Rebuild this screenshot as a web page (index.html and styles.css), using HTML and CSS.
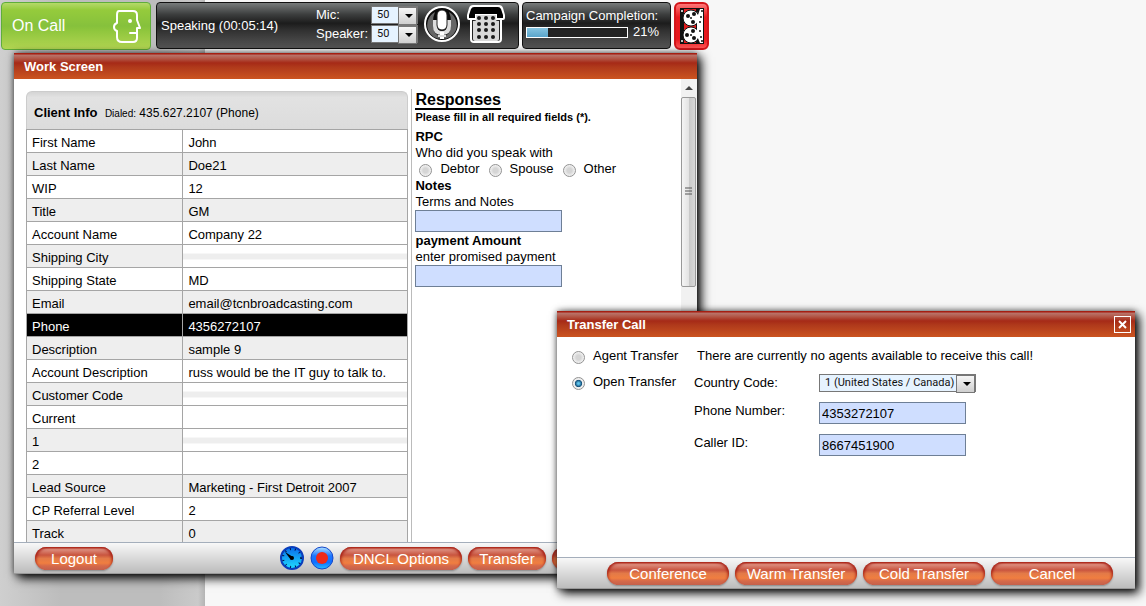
FILE: index.html
```html
<!DOCTYPE html>
<html lang="en">
<head>
  <meta charset="UTF-8">
  <meta name="viewport" content="width=device-width, initial-scale=1.0">
  <title>Agent Desktop</title>
  <link rel="stylesheet" href="styles.css">
</head>
<body>
  <header class="topbar">
    <div class="status">
      <span>On Call</span>
      <svg width="31" height="35" viewBox="0 0 31 35" fill="none" stroke="#fff" stroke-width="2" stroke-linejoin="round" stroke-linecap="round">
        <path d="M8 2h14q4 0 4 4v5l3 8h-3v10q0 4-4 4H11q-5 0-5-5v-6q-3-1-3-4t3-4V6q0-4 2-4z"/>
        <path d="M19 24h7"/>
        <circle cx="19" cy="12" r="1" fill="#fff"/>
      </svg>
    </div>

    <div class="panel call-panel">
      <span class="call-time">Speaking (00:05:14)</span>
      <div class="volumes">
        <label for="mic">Mic:</label>
        <div class="select-box">
          <select id="mic"><option>50</option></select>
        </div>
        <label for="speaker">Speaker:</label>
        <div class="select-box">
          <select id="speaker"><option>50</option></select>
        </div>
      </div>
      <button class="icon-btn" aria-label="Mute microphone">
        <svg width="38" height="38" viewBox="0 0 38 38">
          <circle cx="19" cy="19" r="17" fill="#0a0a0a" stroke="#fff" stroke-width="2"/>
          <path d="M5 25a15 15 0 0 1 7-18q-4 9 0 21l7 6q-10 0-14-9zM33 25a15 15 0 0 0-7-18q4 9 0 21l-7 6q10 0 14-9z" fill="#666"/>
          <path d="M12 15v6q0 7 7 7t7-7v-6" fill="none" stroke="#ddd" stroke-width="4"/>
          <path d="M19 27v7" stroke="#fff" stroke-width="4"/>
          <path d="M15 31h8" stroke="#ddd" stroke-width="2"/>
          <rect x="14" y="5" width="10" height="20" rx="5" fill="#fff" stroke="#222"/>
        </svg>
      </button>
      <button class="icon-btn" aria-label="Dial pad">
        <svg width="40" height="38" viewBox="0 0 40 38">
          <path d="M5 14h30v20q0 3-3 3H8q-3 0-3-3z" fill="#222" stroke="#fff" stroke-width="2"/>
          <path d="M7 0h26q3 0 4 3l2 7v3q0 2-2 2h-6q-2 0-2-2v-2H11v2q0 2-2 2H3q-2 0-2-2v-3l2-7q1-3 4-3z" fill="#fff"/>
          <path d="M8 2h24q2 0 3 2l2 6v3h-6V9H9v4H3v-3l2-6q1-2 3-2z" fill="#000"/>
          <path d="M10 10h20v5q0 1 2 1h1v18q0 2-2 2H9q-2 0-2-2V16h1q2 0 2-1z" fill="#d8d8d8"/>
          <g fill="#1a1a1a">
            <circle cx="13" cy="13" r="2"/><circle cx="20" cy="13" r="2"/><circle cx="27" cy="13" r="2"/>
            <circle cx="13" cy="19" r="2"/><circle cx="20" cy="19" r="2"/><circle cx="27" cy="19" r="2"/>
            <circle cx="13" cy="25" r="2"/><circle cx="20" cy="25" r="2"/><circle cx="27" cy="25" r="2"/>
            <circle cx="13" cy="32" r="2"/><circle cx="20" cy="32" r="2"/><circle cx="27" cy="32" r="2"/>
          </g>
        </svg>
      </button>
    </div>

    <div class="panel campaign">
      <span>Campaign Completion:</span>
      <div class="campaign-row">
        <div class="bar"><div class="bar-fill" style="width: 21%"></div></div>
        <span>21%</span>
      </div>
    </div>

    <button class="recorder" aria-label="Recording">
      <svg width="24" height="36" viewBox="0 0 24 36">
        <path d="M0 0h24v36H0z" fill="#111"/>
        <path d="M4 1h12v34H4z" fill="#e11a1c"/>
        <circle cx="11" cy="10" r="8" fill="#fff" stroke="#111"/>
        <circle cx="11" cy="27" r="8" fill="#fff" stroke="#111"/>
        <path d="M20 1h3v34h-3l-3-7V10z" fill="#fff"/>
        <g fill="#111">
          <circle cx="11" cy="10" r="1"/><circle cx="8" cy="8" r="2"/><circle cx="14" cy="6" r="2"/><circle cx="13" cy="14" r="2"/>
          <circle cx="11" cy="27" r="1"/><circle cx="7" cy="27" r="2"/><circle cx="13" cy="23" r="2"/><circle cx="14" cy="30" r="2"/>
          <circle cx="21" cy="9" r="1"/><circle cx="20" cy="14" r="1"/><circle cx="20" cy="23" r="1"/><circle cx="21" cy="29" r="1"/>
        </g>
        <g fill="#fff"><circle cx="2" cy="3" r="1"/><circle cx="2" cy="33" r="1"/></g>
        <g fill="#111"><circle cx="22" cy="3" r="1"/><circle cx="22" cy="33" r="1"/></g>
      </svg>
    </button>
  </header>

  <section class="window work">
    <h1 class="title">Work Screen</h1>
    <div class="work-body">
      <div class="client">
        <div class="client-head"><h2>Client Info</h2> <small>Dialed:</small> 435.627.2107 (Phone)</div>
        <table>
          <tr><th scope="row">First Name</th><td>John</td></tr>
          <tr><th scope="row">Last Name</th><td>Doe21</td></tr>
          <tr><th scope="row">WIP</th><td>12</td></tr>
          <tr><th scope="row">Title</th><td>GM</td></tr>
          <tr><th scope="row">Account Name</th><td>Company 22</td></tr>
          <tr><th scope="row">Shipping City</th><td></td></tr>
          <tr><th scope="row">Shipping State</th><td>MD</td></tr>
          <tr><th scope="row">Email</th><td>email@tcnbroadcasting.com</td></tr>
          <tr class="selected"><th scope="row">Phone</th><td>4356272107</td></tr>
          <tr><th scope="row">Description</th><td>sample 9</td></tr>
          <tr><th scope="row">Account Description</th><td>russ would be the IT guy to talk to.</td></tr>
          <tr><th scope="row">Customer Code</th><td></td></tr>
          <tr><th scope="row">Current</th><td></td></tr>
          <tr><th scope="row">1</th><td></td></tr>
          <tr><th scope="row">2</th><td></td></tr>
          <tr><th scope="row">Lead Source</th><td>Marketing - First Detroit 2007</td></tr>
          <tr><th scope="row">CP Referral Level</th><td>2</td></tr>
          <tr><th scope="row">Track</th><td>0</td></tr>
        </table>
      </div>

      <form class="responses">
        <h2>Responses</h2>
        <p class="hint">Please fill in all required fields (*).</p>
        <h3>RPC</h3>
        <p>Who did you speak with</p>
        <div class="choices">
          <label><input type="radio" name="rpc"> Debtor</label>
          <label><input type="radio" name="rpc"> Spouse</label>
          <label><input type="radio" name="rpc"> Other</label>
        </div>
        <h3>Notes</h3>
        <label for="notes">Terms and Notes</label>
        <input type="text" id="notes">
        <h3>payment Amount</h3>
        <label for="payment">enter promised payment</label>
        <input type="text" id="payment">
      </form>

      <div class="scrollbar">
        <svg class="scroll-up" width="16" height="18" viewBox="0 0 16 18"><path d="M4 11l4-4 4 4z" fill="#444"/></svg>
        <div class="thumb">
          <svg width="7" height="9" viewBox="0 0 7 9"><path d="M0 1h7M0 4h7M0 7h7" stroke="#555"/></svg>
        </div>
      </div>
    </div>
    <footer class="window-foot">
      <button class="btn small logout">Logout</button>
      <button class="round" aria-label="Statistics">
        <svg width="24" height="24" viewBox="0 0 24 24">
          <defs>
            <linearGradient id="gauge" x1="0" y1="0" x2="0" y2="1">
              <stop offset="0" stop-color="#0869e8"/>
              <stop offset="1" stop-color="#20e0ff"/>
            </linearGradient>
          </defs>
          <circle cx="12" cy="12" r="11" fill="url(#gauge)" stroke="#0a3dbc" stroke-width="2"/>
          <circle cx="12" cy="12" r="9" fill="none" stroke="#04154c" stroke-width="2" stroke-dasharray="1 4"/>
          <path d="M5 6l8 5-2 3z" fill="#000"/>
          <circle cx="12" cy="12" r="2"/>
        </svg>
      </button>
      <button class="round" aria-label="Record">
        <svg width="24" height="24" viewBox="0 0 24 24">
          <defs>
            <linearGradient id="rec" x1="0" y1="0" x2="0" y2="1">
              <stop offset="0" stop-color="#b4e4ff"/>
              <stop offset="0.4" stop-color="#1c76ff"/>
              <stop offset="0.7" stop-color="#1070ff"/>
              <stop offset="1" stop-color="#28c0ff"/>
            </linearGradient>
          </defs>
          <circle cx="12" cy="12" r="11" fill="url(#rec)" stroke="#1546c8" stroke-width="1"/>
          <circle cx="12" cy="12" r="6" fill="#ee2a1a"/>
        </svg>
      </button>
      <button class="btn">DNCL Options</button>
      <button class="btn small">Transfer</button>
      <button class="btn small" aria-label="Hang Up"></button>
    </footer>
  </section>

  <section class="window dialog" role="dialog" aria-labelledby="transfer-title">
    <div class="title">
      <h1 id="transfer-title">Transfer Call</h1>
      <button class="close" aria-label="Close">
        <svg width="11" height="11" viewBox="0 0 11 11"><path d="M2 2l7 7M9 2l-7 7" stroke="#fff" stroke-width="2"/></svg>
      </button>
    </div>
    <form class="dialog-body">
      <label class="option"><input type="radio" name="transfer"> Agent Transfer</label>
      <p class="message">There are currently no agents available to receive this call!</p>
      <label class="option"><input type="radio" name="transfer" checked> Open Transfer</label>
      <div class="fields">
        <label for="country">Country Code:</label>
        <div class="select-box country">
          <select id="country"><option>1 (United States / Canada)</option></select>
        </div>
        <label for="number">Phone Number:</label>
        <input type="text" id="number" value="4353272107">
        <label for="caller">Caller ID:</label>
        <input type="text" id="caller" value="8667451900">
      </div>
    </form>
    <footer class="window-foot">
      <button class="btn">Conference</button>
      <button class="btn">Warm Transfer</button>
      <button class="btn">Cold Transfer</button>
      <button class="btn">Cancel</button>
    </footer>
  </section>
</body>
</html>
```
FILE: styles.css
```css
* {
  box-sizing: border-box;
}
html, body {
  height: 100%;
  margin: 0;
}
body {
  position: relative;
  overflow: hidden;
  font: 13px/16px "Liberation Sans", Arial, sans-serif;
  color: #000;
  background: linear-gradient(to right, #cfcfcf 0, #bdbdbd 60px, #bdbdbd 160px, #cacaca 198px, #b4b4b4 205px, #f7f7f7 205px);
}
h1, h2, h3, p {
  margin: 0;
  font-size: 13px;
}
button {
  padding: 0;
  border: 0;
  background: none;
  font-family: inherit;
  cursor: pointer;
}
svg {
  display: block;
}

/* top bar */
.topbar {
  display: flex;
  align-items: flex-start;
  gap: 3px;
  padding: 2px 1px;
  color: #fff;
}
.status {
  display: flex;
  align-items: center;
  justify-content: space-between;
  width: 150px;
  height: 48px;
  margin-right: 2px;
  padding: 0 8px 0 10px;
  border: 1px solid #5fae3a;
  border-radius: 4px;
  font-size: 16px;
  background: linear-gradient(#b5d96a 0, #95cb3c 15%, #86c13c 50%, #8fc63d 60%, #b2d552 100%);
}
.panel {
  height: 47px;
  border: 1px solid #111;
  border-radius: 4px;
  background: linear-gradient(#777b7b 0, #3d3f3f 25%, #1c1c1c 45%, #303030 60%, #555 100%);
}
.call-panel {
  display: flex;
  align-items: center;
  width: 363px;
  padding-left: 4px;
}
.call-time {
  flex: 1;
}
.volumes {
  display: grid;
  grid-template-columns: 55px 47px;
  row-gap: 1px;
  align-items: center;
  margin: -3px 5px 0 0;
}
.select-box {
  position: relative;
  height: 18px;
}
.select-box select {
  display: block;
  width: 100%;
  height: 18px;
  padding: 0 18px 0 5px;
  border: 1px solid #777;
  border-radius: 0;
  appearance: none;
  font: 11px/16px Roboto, Tahoma, sans-serif;
  color: #111;
  background: #e6f3ff;
}
.select-box::before {
  content: "";
  position: absolute;
  top: 1px;
  right: 1px;
  width: 17px;
  height: 16px;
  border: 1px solid #777;
  background: linear-gradient(#f6f6f6, #cfcfcf);
  pointer-events: none;
}
.select-box::after {
  content: "";
  position: absolute;
  top: 8px;
  right: 5px;
  border: 4px solid transparent;
  border-top-color: #000;
  border-bottom: 0;
  pointer-events: none;
}
.icon-btn {
  margin: -3px 5px 0 0;
}
.icon-btn:last-child {
  margin-right: 12px;
}
.campaign {
  width: 149px;
  padding: 5px 3px;
}
.campaign-row {
  display: flex;
  align-items: center;
  gap: 5px;
}
.bar {
  width: 102px;
  height: 11px;
  border: 1px solid #fff;
  background: #222;
}
.bar-fill {
  height: 100%;
  background: linear-gradient(#86c4e0, #5aa5cb);
}
.recorder {
  display: flex;
  align-items: center;
  justify-content: center;
  width: 35px;
  height: 48px;
  border: 2px solid #d3151a;
  border-radius: 6px;
  background: linear-gradient(#f77, #e8171c 30%, #e8171c 80%, #f55);
}

/* windows on the desktop */
.window {
  position: absolute;
  display: flex;
  flex-direction: column;
  background: #fff;
  box-shadow: 0 0 6px rgba(0, 0, 0, 0.5), 4px 4px 10px #000;
}
.work {
  top: 53px;
  right: 449px;
  bottom: 32px;
  left: 14px;
}
.dialog {
  right: 11px;
  bottom: 17px;
  left: 557px;
}
.title {
  display: flex;
  align-items: center;
  justify-content: space-between;
  height: 26px;
  padding: 1px 4px 0 10px;
  color: #fff;
  background: linear-gradient(#a51f12 0, #a51f12 1px, #b9756b 8%, #b25545 22%, #a62a17 38%, #b03a1b 55%, #cb5420 100%);
}
.close {
  display: flex;
  align-items: center;
  justify-content: center;
  width: 17px;
  height: 17px;
  border: 1px solid #fff;
}
.window-foot {
  display: flex;
  align-items: center;
  gap: 6px;
  flex: none;
  height: 32px;
  overflow: hidden;
  border-top: 1px solid #a4aebb;
  border-bottom: 1px solid #999;
  background: linear-gradient(#f8f8f8, #bcbcbc);
}
.btn {
  flex: none;
  width: 122px;
  height: 23px;
  border-radius: 12px;
  font-size: 15px;
  color: #fff;
  background: linear-gradient(#b6301f 0, #dd8f80 10%, #c9553f 35%, #e37a48 50%, #f07e40 70%, #d66a4a 82%, #c4604c 100%);
  box-shadow: inset 3px 2px 3px -2px #a51d12, inset -3px 2px 3px -2px #a51d12, 0 1px 2px rgba(0, 0, 0, 0.3);
}
.btn.small {
  width: 78px;
}
.round {
  flex: none;
}
.work .window-foot {
  padding-left: 21px;
}
.logout {
  margin-right: auto;
}
.work .window-foot .btn:last-child {
  margin-right: 67px;
}
.dialog .window-foot {
  justify-content: flex-end;
  padding-right: 22px;
}

/* work screen */
.work-body {
  display: flex;
  flex: 1;
  min-height: 0;
  overflow: hidden;
}
.client {
  flex: none;
  width: 56%;
  margin: 12px 3px 0 12px;
}
.client-head {
  height: 38px;
  padding: 13px 7px 0;
  border: 1px solid #ccc;
  border-bottom: 0;
  border-radius: 6px 6px 0 0;
  font-size: 12px;
  background: linear-gradient(#d4d4d4 0, #e2e2e2 15%, #dcdcdc 100%);
}
.client-head h2 {
  display: inline;
  margin-right: 4px;
}
.client-head small {
  font-size: 10px;
}
table {
  width: 100%;
  border-collapse: collapse;
  table-layout: fixed;
}
th, td {
  height: 23px;
  padding: 3px 5px 0;
  border: 1px solid #a5a5a5;
  font-weight: normal;
  line-height: 16px;
  text-align: left;
}
th {
  width: 41%;
}
tr:nth-child(even) {
  background: #eee;
}
td:empty {
  background: linear-gradient(#fff 8px, transparent 8px, transparent 14px, #fff 14px);
}
tr.selected {
  color: #fff;
  background: #000;
}
.responses {
  flex: 1;
  margin-top: 10px;
  padding: 3px;
  border-left: 1px solid #bbb;
}
.responses h2 {
  display: inline-block;
  border-bottom: 2px solid #000;
  font-size: 16px;
  line-height: 16px;
}
.hint {
  margin-bottom: 5px;
  font-size: 11px;
  font-weight: bold;
  line-height: 14px;
}
.choices {
  display: flex;
  gap: 9px;
  margin-bottom: 1px;
  padding-left: 4px;
}
.choices label {
  display: flex;
  gap: 8px;
}
.responses > label {
  display: block;
}
input[type="text"] {
  display: block;
  width: 147px;
  height: 22px;
  padding: 1px 2px;
  border: 1px solid #6e7f96;
  font: 13px "Liberation Sans", Arial, sans-serif;
  background: #cfdeff;
}
.responses input[type="text"] {
  margin-bottom: 1px;
}
input[type="radio"] {
  flex: none;
  width: 13px;
  height: 13px;
  margin: 3px 0 0;
  border: 1px solid #929292;
  border-radius: 50%;
  appearance: none;
  background: radial-gradient(#d5d5d5 30%, #f6f6f6 75%);
}
input[type="radio"]:checked {
  background: radial-gradient(#5fc6ee 10%, #14507a 42%, #eee 52%);
}
.scrollbar {
  flex: none;
  width: 16px;
  background: #f1f1f1;
}
.thumb {
  display: flex;
  align-items: center;
  justify-content: center;
  width: 15px;
  height: 41%;
  border: 1px solid #999;
  border-radius: 2px;
  background: linear-gradient(to right, #f5f5f5, #e4e4e4 50%, #c9c9c9 55%, #d8d8d8);
}

/* transfer dialog */
.dialog-body {
  display: grid;
  grid-template-columns: 122px 1fr;
  align-items: start;
  row-gap: 10px;
  min-height: 220px;
  align-content: start;
  padding: 11px 15px;
}
.option {
  display: flex;
  gap: 8px;
}
.message {
  padding-left: 3px;
}
.fields {
  display: grid;
  grid-template-columns: 125px 1fr;
  align-items: start;
  row-gap: 10px;
}
.fields label {
  padding-top: 1px;
}
.select-box.country {
  width: 157px;
}
```
